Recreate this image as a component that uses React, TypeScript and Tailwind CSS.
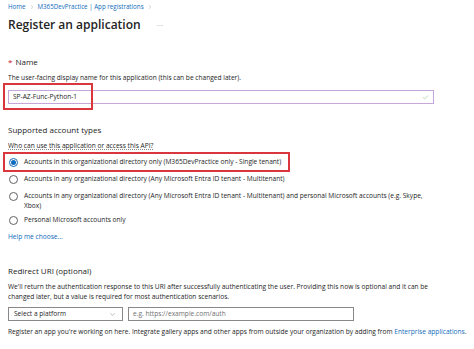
import { ChevronRight, ChevronDown, Check } from 'lucide-react';

const font = { fontFamily: '"Open Sans", "Noto Sans", Arial, sans-serif' };

function Radio({ checked }: { checked?: boolean }) {
  return (
    <span
      className={`shrink-0 w-[9px] h-[9px] rounded-full border flex items-center justify-center ${
        checked ? 'border-[#0f6cbd]' : 'border-[#616161]'
      }`}
    >
      {checked && <span className="w-[5px] h-[5px] rounded-full bg-[#0f6cbd]" />}
    </span>
  );
}

export default function App() {
  return (
    <div style={font} className="w-[474px] h-[349px] overflow-hidden bg-white text-[#242424] pl-[8px]">
      {/* breadcrumb */}
      <div className="h-[14px] flex items-center gap-[3px] text-[6.2px] text-[#0f6cbd]">
        <span>Home</span>
        <ChevronRight className="w-[6px] h-[6px] text-[#8a8886]" strokeWidth={1.5} />
        <span>M365DevPractice | App registrations</span>
        <ChevronRight className="w-[6px] h-[6px] text-[#8a8886]" strokeWidth={1.5} />
      </div>

      {/* title */}
      <div className="h-[21px] flex items-center">
        <h1 className="text-[12px] font-semibold text-[#242424]">Register an application</h1>
        <span className="ml-[16px] text-[7px] text-[#a19f9d] tracking-[0.5px]">...</span>
      </div>

      {/* name */}
      <div className="mt-[21px] h-[12px] flex items-center text-[8px]">
        <span className="text-[#c50f1f] mr-[3px]">*</span>
        <span>Name</span>
      </div>
      <div className="mt-[5px] h-[10px] flex items-center text-[6.6px]">
        The user-facing display name for this application (this can be changed later).
      </div>
      <div className="relative mt-[7px] w-[426px] h-[14px] border border-[#c9a6d9] flex items-center pl-[4px] pr-[4px] text-[6.6px]">
        <span className="flex-1">SP-AZ-Func-Python-1</span>
        <Check className="w-[7px] h-[7px] text-[#8cbd8c]" strokeWidth={2} />
        <div className="absolute left-[-6px] top-[-8px] w-[90px] h-[27px] border-2 border-[#d9363e]" />
      </div>

      {/* account types */}
      <div className="mt-[19px] h-[14px] flex items-center text-[8px]">Supported account types</div>
      <div className="mt-[4px] h-[10px] flex items-center text-[6.6px]">
        <span className="underline decoration-dotted decoration-[#8a8886]">Who can use this application or access this API?</span>
      </div>

      <div className="relative mt-[3px] h-[16px] flex items-center gap-[6px] pl-[1px] text-[6.6px]">
        <Radio checked />
        <span>Accounts in this organizational directory only (M365DevPractice only - Single tenant)</span>
        <div className="absolute left-[-5px] top-[-2px] w-[287px] h-[20px] border-2 border-[#d9363e]" />
      </div>
      <div className="mt-[1px] h-[16px] flex items-center gap-[6px] pl-[1px] text-[6.6px]">
        <Radio />
        <span>Accounts in any organizational directory (Any Microsoft Entra ID tenant - Multitenant)</span>
      </div>
      <div className="mt-[4px] flex items-start gap-[6px] pl-[1px] text-[6.6px] leading-[10px]">
        <span className="mt-[0.5px]">
          <Radio />
        </span>
        <span className="w-[402px]">
          Accounts in any organizational directory (Any Microsoft Entra ID tenant - Multitenant) and personal Microsoft
          accounts (e.g. Skype, Xbox)
        </span>
      </div>
      <div className="mt-[1px] h-[16px] flex items-center gap-[6px] pl-[1px] text-[6.6px]">
        <Radio />
        <span>Personal Microsoft accounts only</span>
      </div>

      <div className="mt-[4px] h-[10px] flex items-center text-[6.6px] text-[#0f6cbd]">Help me choose...</div>

      {/* redirect */}
      <div className="mt-[22px] h-[14px] flex items-center text-[8px]">Redirect URI (optional)</div>
      <p className="mt-[4px] w-[440px] text-[6.6px] leading-[10px]">
        We'll return the authentication response to this URI after successfully authenticating the user. Providing this
        now is optional and it can be changed later, but a value is required for most authentication scenarios.
      </p>
      <div className="mt-[5px] flex items-center gap-[5px] text-[6.6px]">
        <div className="w-[115px] h-[14px] border border-[#8a8886] flex items-center justify-between pl-[5px] pr-[6px]">
          <span>Select a platform</span>
          <ChevronDown className="w-[7px] h-[7px] text-[#616161]" strokeWidth={1.5} />
        </div>
        <div className="w-[226px] h-[14px] border border-[#8a8886] flex items-center pl-[4px] text-[#707070]">
          e.g. https://example.com/auth
        </div>
      </div>
      <div className="mt-[6px] h-[10px] flex items-center text-[6.6px] whitespace-nowrap">
        Register an app you're working on here. Integrate gallery apps and other apps from outside your organization by
        adding from&nbsp;<span className="text-[#0f6cbd]">Enterprise applications</span>.
      </div>
    </div>
  );
}
